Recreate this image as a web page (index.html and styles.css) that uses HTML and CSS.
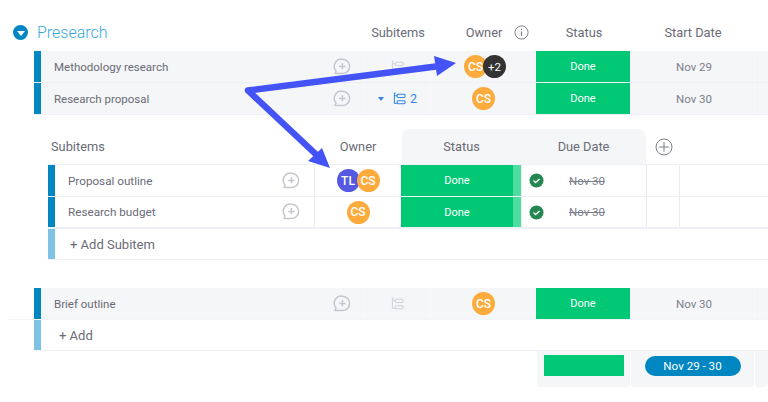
FILE: index.html
```html
<!DOCTYPE html>
<html lang="en">
  <head>
    <meta charset="UTF-8" />
    <meta name="viewport" content="width=device-width, initial-scale=1.0" />
    <title>Presearch board</title>
    <link rel="stylesheet" href="styles.css">
  </head>
  <body>
    <svg width="0" height="0" class="defs">
      <symbol id="bubble" viewBox="0 0 18 18">
        <path d="M9.4 1.2a7.2 7.2 0 0 1 0 14.4H3.1c-.9 0-1.3-.3-.9-1l.8-1.6A7.2 7.2 0 0 1 9.4 1.2z" fill="none" stroke="currentColor" stroke-width="1.5"/>
        <path d="M9.4 5v6.2M6.3 8.4h6.2" fill="none" stroke="currentColor" stroke-width="1.5"/>
      </symbol>
      <symbol id="tree" viewBox="0 0 14 14">
        <path d="M1.5 1v11h3M1.5 4h3M1.5 1h1.5" fill="none" stroke="currentColor" stroke-width="1.1"/>
        <rect x="4.5" y="2.5" width="8.5" height="3.4" rx="1" fill="none" stroke="currentColor" stroke-width="1.1"/>
        <rect x="4.5" y="9.3" width="8.5" height="3.4" rx="1" fill="none" stroke="currentColor" stroke-width="1.1"/>
      </symbol>
      <symbol id="tick" viewBox="0 0 16 16">
        <circle cx="8" cy="8" r="7.5" fill="#258750"/>
        <path d="M4.8 8.1l2.2 2.1 4.2-3.9" fill="none" stroke="#fff" stroke-width="1.4"/>
      </symbol>
    </svg>

    <div class="group-head">
      <span class="group-toggle"><i></i></span>
      <h1 class="group-title">Presearch</h1>
      <div class="col-titles">
        <span class="col-sub">Subitems</span>
        <span class="col-owner">Owner
          <svg class="info" width="15" height="15" viewBox="0 0 15 15">
            <circle cx="7.5" cy="7.5" r="6.6" fill="none" stroke="#7c7e8c" stroke-width="1"/>
            <path d="M7.5 6.4v4.6M7.5 3.8v1.3" stroke="#7c7e8c" stroke-width="1.2"/>
          </svg>
        </span>
        <span class="col-status">Status</span>
        <span class="col-date">Start Date</span>
      </div>
    </div>

    <div class="main-table">
      <div class="row">
        <div class="bar"></div>
        <div class="name">Methodology research <svg class="bubble"><use href="#bubble"/></svg></div>
        <div class="cell sub"><svg class="tree"><use href="#tree"/></svg></div>
        <div class="cell owner pair">
          <span class="avatar orange">CS</span><span class="avatar dark over">+2</span>
        </div>
        <div class="status">Done</div>
        <div class="cell date">Nov 29</div>
        <div class="cell"></div>
      </div>
      <div class="row">
        <div class="bar"></div>
        <div class="name">Research proposal <svg class="bubble"><use href="#bubble"/></svg></div>
        <div class="cell sub open"><i class="caret"></i><svg class="tree"><use href="#tree"/></svg><span>2</span></div>
        <div class="cell owner"><span class="avatar orange">CS</span></div>
        <div class="status">Done</div>
        <div class="cell date">Nov 30</div>
        <div class="cell"></div>
      </div>
    </div>

    <div class="sub-head">
      <span class="sub-title">Subitems</span>
      <span class="sub-owner">Owner</span>
      <div class="sub-tab">
        <span>Status</span>
        <span>Due Date</span>
      </div>
      <svg class="add-col" width="18" height="18" viewBox="0 0 18 18">
        <circle cx="9" cy="9" r="8" fill="none" stroke="#7c7e8c" stroke-width="1"/>
        <path d="M9 4.2v9.6M4.2 9h9.6" stroke="#7c7e8c" stroke-width="1"/>
      </svg>
    </div>
    <div class="sub-table">
      <div class="sub-row">
        <div class="bar"></div>
        <div class="name">Proposal outline <svg class="bubble"><use href="#bubble"/></svg></div>
        <div class="cell owner">
          <span class="avatar purple">TL</span><span class="avatar orange over">CS</span>
        </div>
        <div class="status">Done<i class="status-end"></i></div>
        <div class="cell due"><svg class="tick"><use href="#tick"/></svg><s>Nov 30</s></div>
        <div class="cell"></div>
        <div class="blank"></div>
      </div>
      <div class="sub-row">
        <div class="bar"></div>
        <div class="name">Research budget <svg class="bubble"><use href="#bubble"/></svg></div>
        <div class="cell owner"><span class="avatar orange">CS</span></div>
        <div class="status">Done<i class="status-end"></i></div>
        <div class="cell due"><svg class="tick"><use href="#tick"/></svg><s>Nov 30</s></div>
        <div class="cell"></div>
        <div class="blank"></div>
      </div>
      <div class="add-row">
        <div class="bar light"></div>
        <span class="add-sub">+ Add Subitem</span>
      </div>
    </div>

    <div class="brief-wrap">
      <div class="row brief">
        <div class="bar"></div>
        <div class="name">Brief outline <svg class="bubble"><use href="#bubble"/></svg></div>
        <div class="cell sub"><svg class="tree"><use href="#tree"/></svg></div>
        <div class="cell owner"><span class="avatar orange">CS</span></div>
        <div class="status">Done</div>
        <div class="cell date">Nov 30</div>
        <div class="cell"></div>
      </div>
    </div>
    <div class="main-table">
      <div class="add-row">
        <div class="bar light"></div>
        <span class="add-item">+ Add</span>
      </div>
      <div class="summary">
        <div class="sum-cell"><i class="sum-green"></i></div>
        <div class="sum-cell"><span class="pill">Nov 29 - 30</span></div>
        <div class="sum-cell"></div>
      </div>
    </div>

    <!-- callout arrows -->
    <svg class="arrows" width="768" height="402" viewBox="0 0 768 402">
      <path d="M436 66.5L248 90.5L322 160" fill="none" stroke="#4353f5" stroke-width="6.5" stroke-linejoin="round"/>
      <path d="M456 63L434 56L437 76z" fill="#4353f5"/>
      <path d="M330 168L322 148L308 161z" fill="#4353f5"/>
    </svg>
  </body>
</html>
```

FILE: styles.css
```css
* {
  box-sizing: border-box;
}
html, body {
  margin: 0;
  height: 402px;
  overflow: hidden;
}
body {
  position: relative;
  background: #ffffff;
  color: #6a6b76;
  font-family: Roboto, "Liberation Sans", sans-serif;
  font-size: 11.5px;
}
.defs {
  display: block;
}

/* group header */
.group-head {
  display: flex;
  align-items: center;
  height: 51px;
  padding: 14px 0 0 13px;
}
.group-toggle {
  display: flex;
  align-items: center;
  justify-content: center;
  width: 15px;
  height: 15px;
  border-radius: 50%;
  background: #0086c0;
}
.group-toggle i {
  width: 0;
  height: 0;
  margin-top: 2px;
  border-left: 4.5px solid transparent;
  border-right: 4.5px solid transparent;
  border-top: 5px solid #ffffff;
}
.group-title {
  width: 328px;
  margin: 0 0 0 9px;
  color: #36a8dc;
  font-size: 16px;
  font-weight: 300;
}
.col-titles {
  display: flex;
  font-size: 12.8px;
}
.col-titles span {
  text-align: center;
}
.col-sub {
  width: 66px;
}
.col-owner {
  position: relative;
  width: 106px;
}
.info {
  position: absolute;
  top: 0;
  left: 83px;
}
.col-status {
  width: 94px;
}
.col-date {
  width: 124px;
}

/* main rows */
.main-table {
  margin-left: 34px;
}
.row {
  display: grid;
  grid-template-columns: 7px 323px 66px 106px 94px 124px 1fr;
  height: 32px;
  background: #f5f6f8;
  border-bottom: 1px solid #eef0f5;
}
.bar {
  background: #0086c0;
}
.bar.light {
  background: #7fc3e4;
}
.name {
  display: flex;
  align-items: center;
  justify-content: space-between;
  padding: 0 14px 0 13px;
}
.row .name {
  padding-right: 13px;
}
.sub-row .name {
  font-size: 11.7px;
}
.bubble {
  width: 18px;
  height: 18px;
  color: #c5c7d0;
}
.cell {
  display: flex;
  align-items: center;
  justify-content: center;
  border-left: 1px solid #f9f9fb;
}
.date {
  padding-left: 3px;
  color: #7c7e8c;
}
.tree {
  width: 13px;
  height: 13px;
  color: #d0d2da;
}
.sub.open {
  gap: 4px;
  color: #2f86e8;
  font-size: 12.5px;
}
.sub.open .tree {
  color: #2f86e8;
}
.caret {
  width: 0;
  height: 0;
  margin-right: 5px;
  border-left: 3.5px solid transparent;
  border-right: 3.5px solid transparent;
  border-top: 4px solid #2f86e8;
}
.status {
  position: relative;
  display: flex;
  align-items: center;
  justify-content: center;
  background: #00c875;
  color: #ffffff;
  font-size: 11px;
}
.avatar {
  display: flex;
  align-items: center;
  justify-content: center;
  width: 23px;
  height: 23px;
  border-radius: 50%;
  color: #ffffff;
  font-size: 12px;
  font-weight: 500;
}
.pair {
  padding-left: 3px;
}
.avatar.over {
  margin-left: -4px;
}
.sub-row .avatar.over {
  margin-left: -3px;
}
.orange {
  background: #fdab3d;
}
.dark {
  background: #333333;
  font-size: 11.5px;
  font-weight: 400;
}
.purple {
  background: #5559df;
}

/* subitems */
.sub-head {
  position: relative;
  display: flex;
  align-items: center;
  height: 35px;
  margin-top: 14px;
  font-size: 12.8px;
}
.sub-title {
  width: 314px;
  padding-left: 51px;
}
.sub-owner {
  width: 88px;
  text-align: center;
}
.sub-tab {
  display: grid;
  grid-template-columns: 119px 125px;
  align-items: center;
  width: 244px;
  height: 35px;
  background: #f5f6f8;
  border-radius: 8px 8px 0 0;
  text-align: center;
}
.add-col {
  margin-left: 9px;
}
.sub-table {
  margin-left: 48px;
}
.sub-row {
  display: grid;
  grid-template-columns: 7px 259px 87px 120px 125px 33px 1fr;
  height: 32px;
  border-top: 1px solid #eef0f5;
}
.sub-row + .sub-row {
  height: 33px;
  border-bottom: 2px solid #eef0f5;
}
.sub-row .cell {
  border-left-color: #e9ebf2;
}
.sub-row .blank {
  border-left: 1px solid #e9ebf2;
}
.sub-row .status {
  padding-right: 8px;
}
.status-end {
  position: absolute;
  top: 0;
  right: 0;
  bottom: 0;
  width: 8px;
  background: #4fdc9f;
}
.due {
  position: relative;
  padding-left: 6px;
  color: #7c7e8c;
}
.tick {
  position: absolute;
  top: 8px;
  left: 7px;
  width: 15px;
  height: 15px;
}
.add-row {
  display: flex;
  height: 31px;
  border-bottom: 1px solid #eef0f5;
  align-items: stretch;
}
.add-row .bar {
  width: 7px;
}
.add-row span {
  align-self: center;
  font-size: 13px;
}
.add-sub {
  margin-left: 15px;
}
.add-item {
  margin-left: 18px;
}

/* last row and summary */
.brief-wrap {
  margin: 28px 0 0 8px;
  padding-left: 26px;
  border-bottom: 1px solid #f3f4f7;
}
.row.brief {
  height: 31px;
  border-bottom: 0;
}
.summary {
  display: grid;
  grid-template-columns: 94px 124px 1fr;
  height: 36px;
  margin-left: 502px;
}
.sum-cell {
  display: flex;
  align-items: center;
  justify-content: center;
  padding-bottom: 7px;
  background: #f5f6f8;
  border-radius: 0 0 4px 4px;
  border-left: 1px solid #ffffff;
}
.sum-green {
  width: 80px;
  height: 21px;
  background: #00c875;
}
.pill {
  width: 96px;
  height: 20px;
  border-radius: 10px;
  background: #0086c0;
  color: #ffffff;
  font-size: 11.6px;
  line-height: 20px;
  text-align: center;
}

/* arrows sit over the table */
.arrows {
  position: absolute;
  top: 0;
  left: 0;
}
```
